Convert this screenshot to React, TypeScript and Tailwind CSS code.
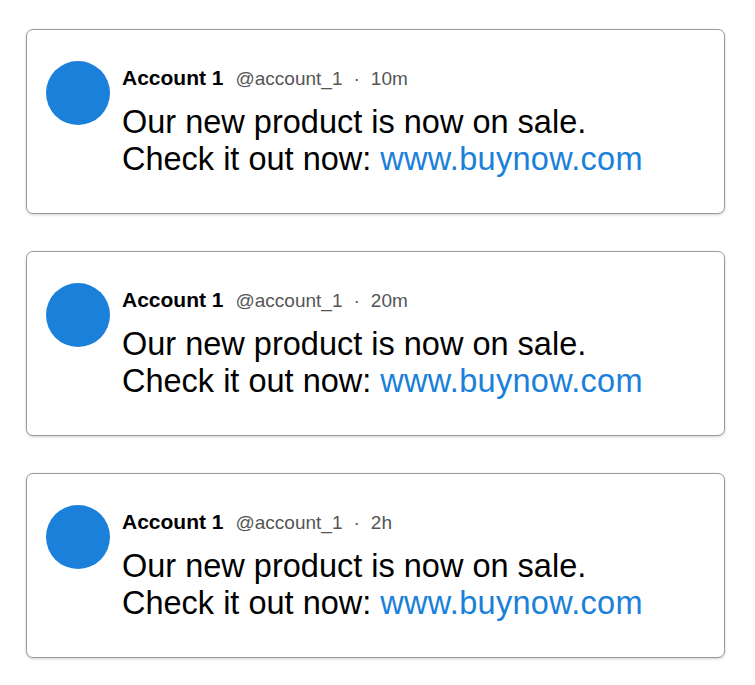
const posts = [
  { id: 1, time: '10m' },
  { id: 2, time: '20m' },
  { id: 3, time: '2h' },
];

function Post({ time }: { time: string }) {
  return (
    <div className="flex h-[185px] w-[699px] items-start rounded-[7px] border border-[#9a9a9a] bg-white pl-[19px] pt-[31px] shadow-[0_1px_3px_rgba(0,0,0,0.18)]">
      <div className="h-16 w-16 shrink-0 rounded-full bg-[#1a80d9]" />
      <div className="ml-3 mt-[5px]">
        <div className="flex items-baseline leading-[23px]">
          <span className="text-[21px] font-bold text-black">Account 1</span>
          <span className="ml-[12px] text-[19px] text-[#555]">@account_1</span>
          <span className="mx-[11px] text-[19px] text-[#555]">·</span>
          <span className="text-[19px] text-[#555]">{time}</span>
        </div>
        <p className="mt-[14px] text-[32.5px] leading-[37px] text-black">
          Our new product is now on sale.
          <br />
          Check it out now:{' '}
          <span className="tracking-[0.3px] text-[#1a80d9]">www.buynow.com</span>
        </p>
      </div>
    </div>
  );
}

export default function App() {
  return (
    <div
      className="flex h-[685px] w-[755px] flex-col gap-[37px] bg-white pl-[26px] pt-[29px]"
      style={{ fontFamily: '"Liberation Sans", Arial, sans-serif' }}
    >
      {posts.map((p) => (
        <Post key={p.id} time={p.time} />
      ))}
    </div>
  );
}
